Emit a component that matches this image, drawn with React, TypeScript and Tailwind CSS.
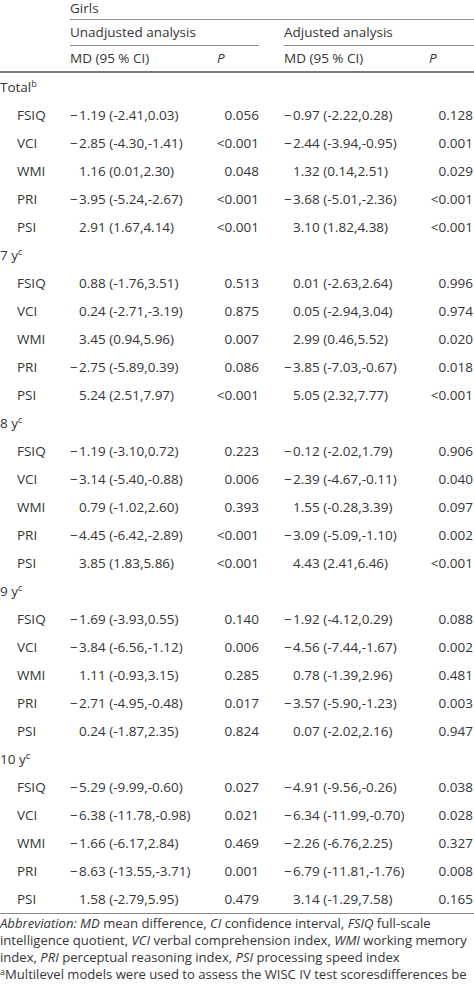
import React from "react";

type Row = [string, string, string, string, string];
type Section = { label: string; sup: string; rows: Row[] };

const sections: Section[] = [
  {
    label: "Total",
    sup: "b",
    rows: [
      ["FSIQ", "−1.19 (-2.41,0.03)", "0.056", "−0.97 (-2.22,0.28)", "0.128"],
      ["VCI", "−2.85 (-4.30,-1.41)", "<0.001", "−2.44 (-3.94,-0.95)", "0.001"],
      ["WMI", "1.16 (0.01,2.30)", "0.048", "1.32 (0.14,2.51)", "0.029"],
      ["PRI", "−3.95 (-5.24,-2.67)", "<0.001", "−3.68 (-5.01,-2.36)", "<0.001"],
      ["PSI", "2.91 (1.67,4.14)", "<0.001", "3.10 (1.82,4.38)", "<0.001"],
    ],
  },
  {
    label: "7 y",
    sup: "c",
    rows: [
      ["FSIQ", "0.88 (-1.76,3.51)", "0.513", "0.01 (-2.63,2.64)", "0.996"],
      ["VCI", "0.24 (-2.71,-3.19)", "0.875", "0.05 (-2.94,3.04)", "0.974"],
      ["WMI", "3.45 (0.94,5.96)", "0.007", "2.99 (0.46,5.52)", "0.020"],
      ["PRI", "−2.75 (-5.89,0.39)", "0.086", "−3.85 (-7.03,-0.67)", "0.018"],
      ["PSI", "5.24 (2.51,7.97)", "<0.001", "5.05 (2.32,7.77)", "<0.001"],
    ],
  },
  {
    label: "8 y",
    sup: "c",
    rows: [
      ["FSIQ", "−1.19 (-3.10,0.72)", "0.223", "−0.12 (-2.02,1.79)", "0.906"],
      ["VCI", "−3.14 (-5.40,-0.88)", "0.006", "−2.39 (-4.67,-0.11)", "0.040"],
      ["WMI", "0.79 (-1.02,2.60)", "0.393", "1.55 (-0.28,3.39)", "0.097"],
      ["PRI", "−4.45 (-6.42,-2.89)", "<0.001", "−3.09 (-5.09,-1.10)", "0.002"],
      ["PSI", "3.85 (1.83,5.86)", "<0.001", "4.43 (2.41,6.46)", "<0.001"],
    ],
  },
  {
    label: "9 y",
    sup: "c",
    rows: [
      ["FSIQ", "−1.69 (-3.93,0.55)", "0.140", "−1.92 (-4.12,0.29)", "0.088"],
      ["VCI", "−3.84 (-6.56,-1.12)", "0.006", "−4.56 (-7.44,-1.67)", "0.002"],
      ["WMI", "1.11 (-0.93,3.15)", "0.285", "0.78 (-1.39,2.96)", "0.481"],
      ["PRI", "−2.71 (-4.95,-0.48)", "0.017", "−3.57 (-5.90,-1.23)", "0.003"],
      ["PSI", "0.24 (-1.87,2.35)", "0.824", "0.07 (-2.02,2.16)", "0.947"],
    ],
  },
  {
    label: "10 y",
    sup: "c",
    rows: [
      ["FSIQ", "−5.29 (-9.99,-0.60)", "0.027", "−4.91 (-9.56,-0.26)", "0.038"],
      ["VCI", "−6.38 (-11.78,-0.98)", "0.021", "−6.34 (-11.99,-0.70)", "0.028"],
      ["WMI", "−1.66 (-6.17,2.84)", "0.469", "−2.26 (-6.76,2.25)", "0.327"],
      ["PRI", "−8.63 (-13.55,-3.71)", "0.001", "−6.79 (-11.81,-1.76)", "0.008"],
      ["PSI", "1.58 (-2.79,5.95)", "0.479", "3.14 (-1.29,7.58)", "0.165"],
    ],
  },
];

const grid = "grid grid-cols-[70px_147px_42px_25px_145px_44px_60px]";

function Md({ v }: { v: string }) {
  const neg = v.startsWith("−");
  const rest = neg ? v.slice(1) : v;
  return (
    <div className="flex items-center whitespace-nowrap">
      <span className="inline-block w-[9px]">{neg ? "−" : ""}</span>
      <span>{rest}</span>
    </div>
  );
}

export default function App() {
  return (
    <div
      className="w-[474px] h-[987px] overflow-hidden bg-white text-[#353535] text-[13.5px]"
      style={{ fontFamily: '"Open Sans", "Noto Sans", sans-serif' }}
    >
      <div className="w-[533px]">
        {/* header row 1 */}
        <div className={`${grid} h-[20px]`}>
          <div />
          <div className="col-span-6 border-b border-[#8f8f8f] leading-[16px]">Girls</div>
        </div>
        {/* header row 2 */}
        <div className={`${grid} h-[26px]`}>
          <div />
          <div className="col-span-2 flex items-center border-b border-[#8f8f8f]">Unadjusted analysis</div>
          <div />
          <div className="col-span-3 flex items-center border-b border-[#8f8f8f]">Adjusted analysis</div>
        </div>
        {/* header row 3 */}
        <div className={`${grid} h-[27px] border-b-2 border-[#7a7a7a]`}>
          <div />
          <div className="flex items-center">MD (95 % CI)</div>
          <div className="flex items-center italic">P</div>
          <div />
          <div className="flex items-center">MD (95 % CI)</div>
          <div className="flex items-center italic">P</div>
          <div />
        </div>
        {/* body */}
        <div className="border-b-[1.5px] border-[#8a8a8a]">
          {sections.map((s) => (
            <React.Fragment key={s.label}>
              <div className={`${grid} h-[28px]`}>
                <div className="col-span-3 flex items-center whitespace-nowrap">
                  <span>
                    {s.label}
                    <sup className="text-[9px]">{s.sup}</sup>
                  </span>
                </div>
              </div>
              {s.rows.map((r) => (
                <div key={s.label + r[0]} className={`${grid} h-[28px]`}>
                  <div className="flex items-center pl-[17px]">{r[0]}</div>
                  <Md v={r[1]} />
                  <div className="flex items-center justify-end">{r[2]}</div>
                  <div />
                  <Md v={r[3]} />
                  <div className="flex items-center justify-end whitespace-nowrap">{r[4]}</div>
                  <div />
                </div>
              ))}
            </React.Fragment>
          ))}
        </div>
        {/* footer */}
        <div className="pt-[1px] text-[13.1px] leading-[17px] whitespace-nowrap">
          <div>
            <i>Abbreviation: MD</i> mean difference, <i>CI</i> confidence interval, <i>FSIQ</i> full-scale
          </div>
          <div>
            intelligence quotient, <i>VCI</i> verbal comprehension index, <i>WMI</i> working memory
          </div>
          <div>
            index, <i>PRI</i> perceptual reasoning index, <i>PSI</i> processing speed index
          </div>
          <div>
            <sup className="text-[9px]">a</sup>Multilevel models were used to assess the WISC IV test scoresdifferences be
          </div>
        </div>
      </div>
    </div>
  );
}
